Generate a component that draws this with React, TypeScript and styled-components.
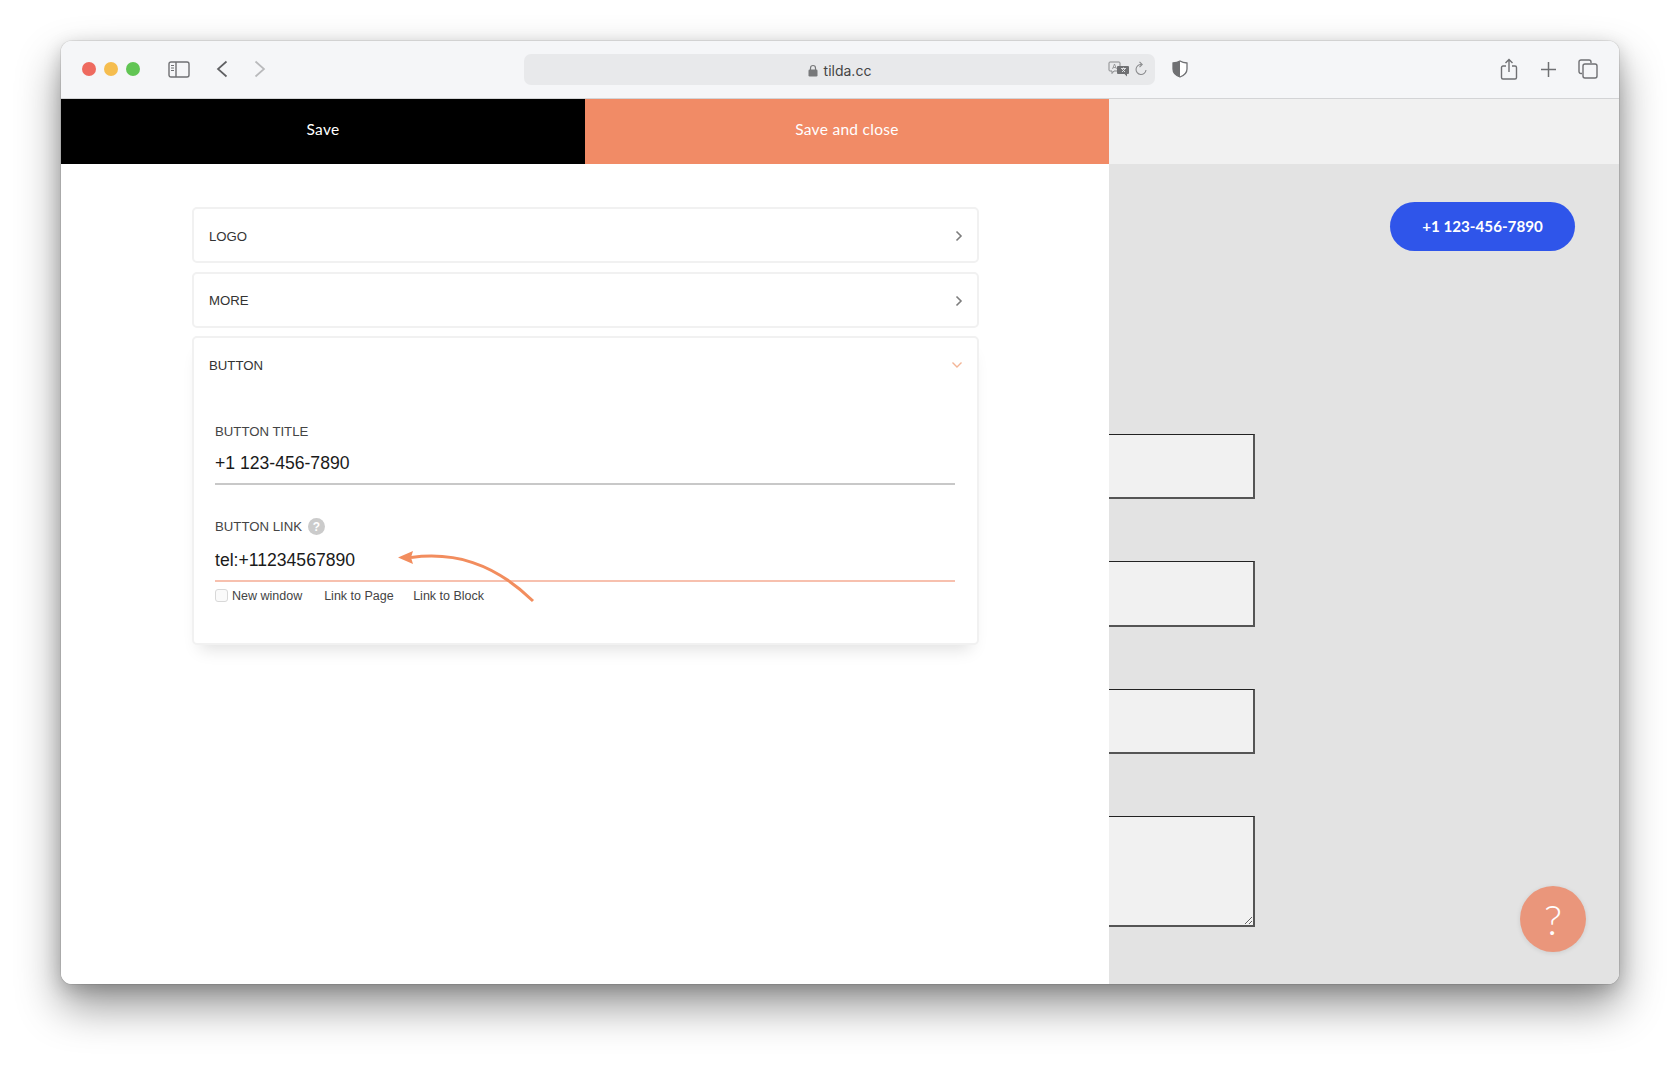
import React from 'react';
import styled, { createGlobalStyle } from 'styled-components';

const GlobalStyle = createGlobalStyle`
  html, body {
    margin: 0;
    padding: 0;
    height: 1065px;
    overflow: hidden;
    background: #fff;
    font-family: "Liberation Sans", Arial, sans-serif;
  }
  * { box-sizing: border-box; }
`;

const Page = styled.div`
  padding: 41px 61px 0;
`;

const Window = styled.div`
  position: relative;
  width: 1558px;
  height: 943px;
  border-radius: 11px;
  overflow: hidden;
  display: flex;
  flex-direction: column;
`;

const WindowShadow = styled.div`
  width: 1558px;
  height: 943px;
  border-radius: 11px;
  box-shadow: 0 0 0 1px rgba(0, 0, 0, 0.08), 0 22px 44px rgba(0, 0, 0, 0.42), 0 5px 18px rgba(0, 0, 0, 0.18);
`;

const Toolbar = styled.div`
  height: 57.5px;
  flex: none;
  display: flex;
  align-items: center;
  padding-left: 21px;
  background: #f5f6f8;
  border-bottom: 1px solid #d3d4d6;
`;

const Lights = styled.div`
  display: flex;
  gap: 8px;
`;

const Light = styled.span<{ $color: string }>`
  width: 14px;
  height: 14px;
  border-radius: 50%;
  background: ${(p) => p.$color};
`;

const ToolIcon = styled.svg<{ $left: number }>`
  flex: none;
  display: block;
  margin-left: ${(p) => p.$left}px;
`;

const AddressBar = styled.div`
  width: 631px;
  height: 31px;
  margin-left: 258px;
  padding: 0 8px 0 0;
  border-radius: 7px;
  background: #e8e9eb;
  display: flex;
  align-items: center;
  flex: none;
`;

const Address = styled.div`
  flex: 1;
  padding: 2px 0 0 47px;
  display: flex;
  align-items: center;
  justify-content: center;
  gap: 6px;
  font-family: Inter, "Liberation Sans", sans-serif;
  font-size: 14px;
  color: #444;
`;

const AddressIcons = styled.div`
  display: flex;
  align-items: center;
  gap: 5px;
`;

const Content = styled.div`
  flex: 1;
  min-height: 0;
  display: flex;
`;

const EditPanel = styled.div`
  width: 1048px;
  flex: none;
  background: #fff;
`;

const ActionBar = styled.div`
  height: 65px;
  display: flex;
`;

const ActionButton = styled.div<{ $bg: string }>`
  flex: 1;
  display: flex;
  align-items: center;
  justify-content: center;
  padding-bottom: 5px;
  background: ${(p) => p.$bg};
  color: #fff;
  font-family: Lato, sans-serif;
  font-size: 15.5px;
  font-weight: 400;
  letter-spacing: 0.3px;
`;

const Sections = styled.div`
  width: 787px;
  margin: 43.5px 0 0 131px;
  display: flex;
  flex-direction: column;
  gap: 8.5px;
`;

const Card = styled.div<{ $open?: boolean }>`
  position: relative;
  border: 2px solid #f1f1f1;
  border-radius: 5px;
  background: #fff;
  height: ${(p) => (p.$open ? '309px' : '56px')};
  box-shadow: ${(p) => (p.$open ? '0 12px 16px -8px rgba(0, 0, 0, 0.13)' : 'none')};
`;

const CardHeader = styled.div`
  height: 53px;
  padding: 1.5px 14px 0 15px;
  display: flex;
  align-items: center;
  justify-content: space-between;
  font-size: 13.2px;
  color: #333;
`;

const CardBody = styled.div`
  padding: 31.5px 21px 0;
`;

const FieldLabel = styled.div`
  display: flex;
  align-items: center;
  gap: 6px;
  height: 18px;
  font-size: 13.2px;
  color: #444;
`;

const HelpDot = styled.span`
  width: 17px;
  height: 17px;
  border-radius: 50%;
  background: #cbcbcb;
  color: #fff;
  font-size: 12px;
  font-weight: 700;
  display: flex;
  align-items: center;
  justify-content: center;
`;

const FieldValue = styled.div<{ $active?: boolean }>`
  height: ${(p) => (p.$active ? '46px' : '44px')};
  padding-top: ${(p) => (p.$active ? '13px' : '11px')};
  width: 740px;
  font-size: 17.6px;
  line-height: 22px;
  color: #1a1a1a;
  border-bottom: ${(p) => (p.$active ? '2px solid #f7c0ae' : '2px solid #c8c8c8')};
`;

const Field = styled.div`
  margin-bottom: 33px;
`;

const LinkField = styled.div`
  display: flex;
  flex-direction: column;
`;

const LinkOptions = styled.div`
  margin-top: 7px;
  display: flex;
  align-items: center;
  font-size: 12.5px;
  color: #444;
`;

const CheckBox = styled.span`
  width: 13px;
  height: 13px;
  margin-right: 4px;
  border: 1px solid #d8d8d8;
  border-radius: 3px;
  background: #fafafa;
`;

const OptionLabel = styled.span<{ $left?: number }>`
  margin-left: ${(p) => p.$left ?? 0}px;
`;

const Arrow = styled.svg`
  position: absolute;
  left: 204px;
  top: 210px;
`;

const Preview = styled.div`
  flex: 1;
  display: flex;
  flex-direction: column;
  background: #e3e3e3;
`;

const PreviewTop = styled.div`
  height: 65px;
  flex: none;
  background: #f1f1f1;
`;

const PreviewBody = styled.div`
  padding-top: 38px;
`;

const PhoneButton = styled.div`
  width: 185px;
  height: 49px;
  margin: 0 0 183px 281px;
  border-radius: 25px;
  background: #2f55ea;
  color: #fff;
  font-family: Lato, sans-serif;
  font-size: 15.2px;
  font-weight: 700;
  display: flex;
  align-items: center;
  justify-content: center;
`;

const FormFields = styled.div`
  display: flex;
  flex-direction: column;
  gap: 62px;
`;

const FormInput = styled.input`
  display: block;
  width: 146px;
  height: 65.5px;
  padding: 0;
  border: 1px solid #222;
  border-bottom: 2px solid #555;
  border-right: 2px solid #555;
  border-left: none;
  border-radius: 0;
  background: #f1f1f1;
  outline: none;
`;

const FormArea = styled.textarea`
  display: block;
  width: 146px;
  height: 111px;
  padding: 0;
  border: 1px solid #222;
  border-bottom: 2px solid #555;
  border-right: 2px solid #555;
  border-left: none;
  border-radius: 0;
  background: #f1f1f1;
  outline: none;
  resize: both;
`;

const HelpBubble = styled.div`
  position: absolute;
  right: 33px;
  bottom: 32px;
  width: 66px;
  height: 66px;
  border-radius: 50%;
  background: #ea967b;
  box-shadow: 0 1px 5px rgba(0, 0, 0, 0.1);
  color: #fff;
  font-family: Lato, sans-serif;
  font-size: 42px;
  font-weight: 300;
  display: flex;
  align-items: center;
  justify-content: center;
`;

const ChevronRight = () => (
  <svg width="8" height="12" viewBox="0 0 8 12" fill="none">
    <path d="M1.5 1.5L6 6l-4.5 4.5" stroke="#7d7d7d" strokeWidth="1.6" />
  </svg>
);

const CollapsedCard = ({ title }: { title: string }) => (
  <Card>
    <CardHeader>
      {title}
      <ChevronRight />
    </CardHeader>
  </Card>
);

export default function App() {
  return (
    <Page>
      <GlobalStyle />
      <WindowShadow>
        <Window>
          <Toolbar>
            <Lights>
              <Light $color="#ee6a5f" />
              <Light $color="#f5bd4f" />
              <Light $color="#61c554" />
            </Lights>
            <ToolIcon $left={28} width="22" height="17" viewBox="0 0 22 17" fill="none">
              <rect x="1" y="1" width="20" height="15" rx="2" stroke="#6f7073" strokeWidth="1.4" />
              <path d="M8 1v15" stroke="#6f7073" strokeWidth="1.4" />
              <path d="M3 4.5h3M3 7h3M3 9.5h3" stroke="#6f7073" strokeWidth="1.2" />
            </ToolIcon>
            <ToolIcon $left={26} width="12" height="18" viewBox="0 0 12 18" fill="none">
              <path d="M10.5 1.5L2 9l8.5 7.500" stroke="#5f6063" strokeWidth="1.7" />
            </ToolIcon>
            <ToolIcon $left={26} width="12" height="18" viewBox="0 0 12 18" fill="none">
              <path d="M1.500 1.500L10 9l-8.500 7.500" stroke="#b9babc" strokeWidth="1.7" />
            </ToolIcon>
            <AddressBar>
              <Address>
                <svg width="10" height="13" viewBox="0 0 10 13">
                  <path d="M2.5 6V4a2.500 2.500 0 015 0v2" fill="none" stroke="#77787a" strokeWidth="1.2" />
                  <rect x="0.5" y="5.5" width="9" height="7" rx="1.2" fill="#77787a" />
                </svg>
                tilda.cc
              </Address>
              <AddressIcons>
                <svg width="22" height="16" viewBox="0 0 22 16" fill="none">
                  <path d="M2 1h9a1 1 0 011 1v7a1 1 0 01-1 1H6l-2 2.500V10H2a1 1 0 01-1-1V2a1 1 0 011-1z" stroke="#8a8b8d" strokeWidth="1" />
                  <path d="M4.500 8l2-5 2 5M5.200 6.500h2.600" stroke="#8a8b8d" strokeWidth="0.8" />
                  <path d="M10 5h10a1 1 0 011 1v6a1 1 0 01-1 1h-1v2.500L16.500 13H10a1 1 0 01-1-1V6a1 1 0 011-1z" fill="#6f7073" />
                  <path d="M13 7.500h5M15.500 6.500v1M14 11l3-3M17 11l-3-3" stroke="#e8e9eb" strokeWidth="0.9" />
                </svg>
                <svg width="12" height="16" viewBox="0 0 12 16" fill="none">
                  <path d="M6.500 3.500A5 5 0 1011 9" stroke="#8a8b8d" strokeWidth="1.1" />
                  <path d="M4.500 0.800L7.200 3.500 4.500 6.200" stroke="#8a8b8d" strokeWidth="1.1" />
                </svg>
              </AddressIcons>
            </AddressBar>
            <ToolIcon $left={17} width="16" height="18" viewBox="0 0 16 18">
              <path d="M8 1c2 1.200 4.200 1.800 7 2v6c0 3.800-3 6.500-7 8-4-1.500-7-4.200-7-8V3c2.800-.2 5-.8 7-2z" fill="#fff" stroke="#6f7073" strokeWidth="1.300" />
              <path d="M8 1c-2 1.200-4.200 1.800-7 2v6c0 3.800 3 6.500 7 8z" fill="#6f7073" />
            </ToolIcon>
            <ToolIcon $left={312} width="18" height="22" viewBox="0 0 18 22" fill="none">
              <path d="M6 8H3a1.500 1.500 0 00-1.500 1.500v10A1.500 1.500 0 003 21h12a1.500 1.500 0 001.500-1.500v-10A1.500 1.500 0 0015 8h-3" stroke="#6f7073" strokeWidth="1.400" />
              <path d="M9 14V1.500M5.500 5L9 1.500 12.500 5" stroke="#6f7073" strokeWidth="1.400" />
            </ToolIcon>
            <ToolIcon $left={23} width="15" height="15" viewBox="0 0 15 15" fill="none">
              <path d="M7.500 0v15M0 7.500h15" stroke="#6f7073" strokeWidth="1.500" />
            </ToolIcon>
            <ToolIcon $left={22} width="20" height="20" viewBox="0 0 20 20" fill="none">
              <path d="M4 14.500H3A2 2 0 011 12.500V3a2 2 0 012-2h8a2 2 0 012 2v1" stroke="#6f7073" strokeWidth="1.400" />
              <rect x="5" y="5" width="14" height="14" rx="2" stroke="#6f7073" strokeWidth="1.400" />
            </ToolIcon>
          </Toolbar>
          <Content>
            <EditPanel>
              <ActionBar>
                <ActionButton $bg="#000">Save</ActionButton>
                <ActionButton $bg="#f18b66">Save and close</ActionButton>
              </ActionBar>
              <Sections>
                <CollapsedCard title="LOGO" />
                <CollapsedCard title="MORE" />
                <Card $open>
                  <CardHeader>
                    BUTTON
                    <svg width="12" height="8" viewBox="0 0 12 8" fill="none">
                      <path d="M1.500 1.500L6 6l4.500-4.500" stroke="#f3b596" strokeWidth="1.400" />
                    </svg>
                  </CardHeader>
                  <CardBody>
                    <Field>
                      <FieldLabel>BUTTON TITLE</FieldLabel>
                      <FieldValue>+1 123-456-7890</FieldValue>
                    </Field>
                    <LinkField>
                      <FieldLabel>
                        BUTTON LINK
                        <HelpDot>?</HelpDot>
                      </FieldLabel>
                      <FieldValue $active>tel:+11234567890</FieldValue>
                      <LinkOptions>
                        <CheckBox />
                        <OptionLabel>New window</OptionLabel>
                        <OptionLabel $left={22}>Link to Page</OptionLabel>
                        <OptionLabel $left={19.5}>Link to Block</OptionLabel>
                      </LinkOptions>
                    </LinkField>
                  </CardBody>
                  <Arrow width="140" height="56" viewBox="0 0 140 56" fill="none">
                    <path d="M13 9.500C55 4 95 14 135 53" stroke="#f28d5e" strokeWidth="3" />
                    <path d="M0 9.500L15 3 13 9.500 15 16z" fill="#f28d5e" />
                  </Arrow>
                </Card>
              </Sections>
            </EditPanel>
            <Preview>
              <PreviewTop />
              <PreviewBody>
                <PhoneButton>+1 123-456-7890</PhoneButton>
                <FormFields>
                  <FormInput readOnly />
                  <FormInput readOnly />
                  <FormInput readOnly />
                  <FormArea readOnly />
                </FormFields>
              </PreviewBody>
            </Preview>
          </Content>
          <HelpBubble>?</HelpBubble>
        </Window>
      </WindowShadow>
    </Page>
  );
}
